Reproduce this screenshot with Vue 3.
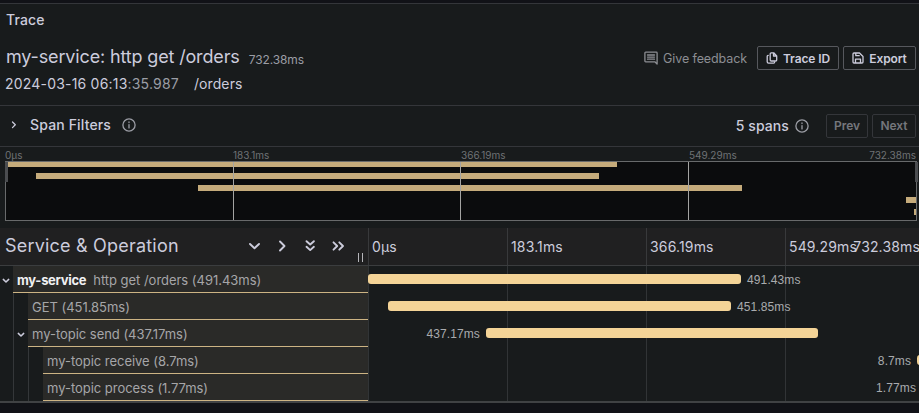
<script setup>
import { ref, computed } from 'vue';

const ticks = ['0μs', '183.1ms', '366.19ms', '549.29ms'];
const total = '732.38ms';

// left / width are percentages of the detail timeline, mini* of the minimap
const spans = ref([
  { id: 1, depth: 0, service: 'my-service', name: 'http get /orders', duration: '491.43ms', left: 0, width: 67.1, side: 'right', miniLeft: 0.2, miniWidth: 66.9, parent: true },
  { id: 2, depth: 1, name: 'GET', duration: '451.85ms', left: 3.6, width: 61.7, side: 'right', miniLeft: 3.33, miniWidth: 61.8 },
  { id: 3, depth: 1, name: 'my-topic send', duration: '437.17ms', left: 21.22, width: 59.75, side: 'left', miniLeft: 21.1, miniWidth: 59.75, parent: true },
  { id: 4, depth: 2, name: 'my-topic receive', duration: '8.7ms', left: 98.75, width: 1.2, side: 'left', miniLeft: 98.95, miniWidth: 1.05 },
  { id: 5, depth: 2, name: 'my-topic process', duration: '1.77ms', left: 99.65, width: 0.3, side: 'left', miniLeft: 99.75, miniWidth: 0.25 },
]);

const spanCount = computed(() => `${spans.value.length} spans`);
</script>

<template>
  <div class="page">
    <section class="panel">
      <h6 class="panel-title">Trace</h6>

      <header class="trace-header">
        <div class="title-row">
          <h1>my-service: http get /orders</h1>
          <span class="total">{{ total }}</span>
          <div class="actions">
            <a class="feedback">
              <svg width="14" height="14" viewBox="0 0 14 14">
                <path d="M1.7 1.2h10.6q.8 0 .8.8v11l-2.3-2.2H1.7q-.8 0-.8-.8V2q0-.8.8-.8zM3.5 4h7M3.5 6.1h7M3.5 8.2h7" />
              </svg>
              Give feedback
            </a>
            <button class="btn trace-id">
              <svg width="12" height="12" viewBox="0 0 12 12">
                <path d="M4.2 2v6q0 1 1 1h4.5q1 0 1-1V4L7.7.8H5.2q-1 0-1 1zM7.5 1v3h3M2.2 3.3q-1 .2-1 1v5.5q0 1.4 1.4 1.4h4.8q1 0 1.2-.8" />
              </svg>
              Trace ID
            </button>
            <button class="btn export">
              <svg width="12" height="12" viewBox="0 0 12 12">
                <path d="M2 1h5.5L11 4.5V10q0 1-1 1H2q-1 0-1-1V2q0-1 1-1zM3.8 1v2.7h3.4M3.5 11V7.2h5V11" />
              </svg>
              Export
            </button>
          </div>
        </div>
        <div class="sub-row">
          <span class="date">2024-03-16 06:13<span class="dim">:35.987</span></span>
          <span class="url">/orders</span>
        </div>
      </header>

      <div class="filters">
        <svg class="caret" width="6" height="8" viewBox="0 0 6 8"><path d="M1.5 1l2.8 2.8-2.8 2.8" /></svg>
        <span class="filters-label">Span Filters</span>
        <svg class="info" width="14" height="14" viewBox="0 0 14 14">
          <circle cx="7" cy="7" r="6.1" /><path d="M7 6.6v3.3M7 4v.6" />
        </svg>
        <span class="count">{{ spanCount }}</span>
        <svg class="info low" width="14" height="14" viewBox="0 0 14 14">
          <circle cx="7" cy="7" r="6.1" /><path d="M7 6.6v3.3M7 4v.6" />
        </svg>
        <button class="btn disabled prev">Prev</button>
        <button class="btn disabled next">Next</button>
      </div>

      <div class="minimap">
        <div class="mini-labels">
          <span v-for="tick in ticks" :key="tick">{{ tick }}</span>
          <span class="mini-end">{{ total }}</span>
        </div>
        <div class="mini-graph">
          <div
            v-for="span in spans"
            :key="span.id"
            class="mini-bar"
            :style="{ marginLeft: span.miniLeft + '%', width: span.miniWidth + '%' }"
          ></div>
          <div class="mini-ticks"><i v-for="tick in ticks" :key="tick"></i></div>
          <div class="handle start"></div>
          <div class="handle end"></div>
        </div>
      </div>

      <div class="timeline-header">
        <div class="name-head">
          <h2>Service &amp; Operation</h2>
          <svg class="collapsers" width="98" height="14" viewBox="0 0 98 14">
            <path d="M2 5l4.500 4.200L11 5" />
            <path d="M32 2.500L36.500 7 32 11.500" />
            <path d="M58.500 2.200l3.700 3.300 3.700-3.300M58.500 7.800l3.700 3.300 3.700-3.300" />
            <path d="M85.500 3.300L89.200 7l-3.700 3.700M91.300 3.300L95 7l-3.700 3.700" />
          </svg>
          <span class="resizer"></span>
        </div>
        <div class="tick-head">
          <span v-for="tick in ticks" :key="tick">{{ tick }}</span>
          <span class="head-end">{{ total }}</span>
        </div>
      </div>

      <div v-for="span in spans" :key="span.id" class="row">
        <div class="name-col">
          <i v-for="n in span.depth" :key="n" class="indent" :class="{ first: n === 1 }"></i>
          <span class="toggle" :class="{ root: span.depth === 0 }">
            <svg v-if="span.parent" width="8" height="6" viewBox="0 0 8 6"><path d="M1.3 1.4L4 4l2.700-2.600" /></svg>
          </span>
          <div class="span-name">
            <strong v-if="span.service">{{ span.service }}</strong>
            <span>{{ span.name }} ({{ span.duration }})</span>
          </div>
        </div>
        <div class="view">
          <div class="grid"><i v-for="tick in ticks" :key="tick"></i></div>
          <div class="bar" :style="{ marginLeft: span.left + '%', width: span.width + '%' }">
            <span class="bar-label" :class="span.side">{{ span.duration }}</span>
          </div>
        </div>
      </div>
    </section>
  </div>
</template>

<style>
body {
  background: #111217;
}
</style>

<style scoped>
.page {
  box-sizing: border-box;
  width: 919px;
  height: 413px;
  padding-top: 3px;
  overflow: hidden;
  background: #111217;
  color: #ccccdc;
  font-family: Inter, "Liberation Sans", sans-serif;
  font-size: 14px;
}

.page * {
  box-sizing: border-box;
}

svg {
  display: block;
  flex: none;
  fill: none;
  stroke: currentColor;
  stroke-width: 1.3;
  stroke-linecap: round;
  stroke-linejoin: round;
}

h1, h2, h6 {
  margin: 0;
  font-weight: 400;
}

.panel {
  height: 400px;
  overflow: hidden;
  background: #181b1c;
  border-top: 1px solid #34363a;
  border-bottom: 2px solid #404244;
}

.panel-title {
  height: 32px;
  padding-left: 6px;
  font-size: 14px;
  font-weight: 500;
  letter-spacing: 0.1px;
  line-height: 32px;
}

.trace-header {
  height: 70px;
  padding: 9px 3px 0 5px;
  border-bottom: 1px solid #34363a;
}

.title-row {
  display: flex;
  align-items: center;
  height: 26px;
}

h1 {
  padding: 0 0 3px 1px;
  font-size: 18px;
  letter-spacing: -0.15px;
}

.total {
  margin: 2px 0 0 9px;
  color: #9b9da5;
  font-size: 12px;
  letter-spacing: -0.1px;
}

.actions {
  display: flex;
  align-items: center;
  margin-left: auto;
}

.feedback {
  display: flex;
  align-items: center;
  gap: 5px;
  margin-right: 10px;
  color: #8c8e93;
  font-size: 12.5px;
  letter-spacing: -0.1px;
}

.btn {
  display: flex;
  align-items: center;
  justify-content: center;
  gap: 5px;
  height: 24px;
  padding: 0;
  border: 1px solid #56585d;
  border-radius: 2px;
  background: transparent;
  color: #ccccdc;
  font: 600 12px Inter, sans-serif;
  letter-spacing: -0.1px;
}

.trace-id {
  width: 82px;
  margin-right: 4px;
}

.export {
  width: 73px;
}

.sub-row {
  display: flex;
  gap: 15px;
  height: 26px;
  line-height: 25px;
}

.date {
  letter-spacing: 0.2px;
}

.url {
  letter-spacing: 0.1px;
}

.dim {
  color: #9b9da5;
}

.filters {
  display: flex;
  align-items: center;
  height: 41px;
  padding: 0 3px 1px 11px;
  border-bottom: 1px solid #34363a;
  font-weight: 500;
}

.caret {
  margin-bottom: 2px;
}

.filters-label {
  margin: 0 11px 2px 13px;
  letter-spacing: 0.15px;
}

.info {
  margin-bottom: 1px;
  color: #9b9da5;
}

.info.low {
  margin: 1px 0 0;
}

.count {
  margin: 0 6px 0 auto;
  letter-spacing: 0.1px;
}

.disabled {
  border-color: #34363a;
  color: #75777c;
}

.prev {
  width: 42px;
  margin: 0 4px 0 17px;
}

.next {
  width: 44px;
}

.minimap {
  height: 81px;
  padding: 2px 2px 0 5px;
}

.mini-labels {
  position: relative;
  display: grid;
  grid-template-columns: repeat(4, 1fr);
  height: 12px;
  color: #6f7275;
  font-size: 10px;
  line-height: 12px;
}

.mini-end {
  position: absolute;
  right: 1px;
}

.mini-graph {
  position: relative;
  height: 60px;
  border: 1px solid #686a6b;
  background: #0b0c0d;
}

.mini-bar {
  height: 6px;
  margin-bottom: 6px;
  background: #c5ab7b;
}

.mini-bar:first-child {
  height: 5px;
}

.mini-ticks {
  position: absolute;
  inset: 0 1px 0 -1px;
  display: grid;
  grid-template-columns: repeat(4, 1fr);
}

.mini-ticks i + i {
  border-left: 1px solid #a4a4a2;
}

.handle {
  position: absolute;
  top: 0;
  width: 3px;
  height: 20px;
  background: #4b4d50;
}

.start {
  left: -1px;
}

.end {
  right: -2px;
}

.timeline-header {
  display: flex;
  height: 38px;
  border-bottom: 1px solid #3b3d3f;
  background: #202021;
}

.name-head {
  position: relative;
  display: flex;
  flex: none;
  align-items: center;
  justify-content: space-between;
  width: 368px;
  padding: 0 22px 2px 5px;
}

h2 {
  font-size: 18px;
  letter-spacing: 0.2px;
}

.collapsers {
  stroke-width: 1.9;
}

.resizer {
  position: absolute;
  right: 5px;
  bottom: 3px;
  width: 5px;
  height: 9px;
  border: solid #b5b5ba;
  border-width: 0 1px;
}

.tick-head {
  position: relative;
  display: grid;
  flex: none;
  grid-template-columns: repeat(4, 139px);
  letter-spacing: 0.15px;
  line-height: 37px;
}

.tick-head span {
  padding-left: 3px;
  border-left: 1px solid #38393b;
}

.tick-head .head-end {
  position: absolute;
  right: 4px;
  border: 0;
}

.row {
  display: flex;
  height: 27px;
}

.name-col {
  display: flex;
  flex: none;
  width: 368px;
}

.indent {
  width: 15px;
  border-right: 1px solid #343739;
}

.indent.first {
  width: 14px;
}

.toggle {
  display: flex;
  align-items: center;
  justify-content: center;
  width: 14px;
  padding-top: 2px;
}

.toggle.root {
  width: 13px;
  padding-right: 1px;
}

.toggle svg {
  stroke-width: 1.5;
}

.span-name {
  flex: 1;
  padding-left: 4px;
  border-bottom: 1px solid #cdb484;
  background: #2a2a28;
  color: #a6a6a8;
  font-size: 13px;
  letter-spacing: -0.03px;
  line-height: 28px;
  white-space: nowrap;
}

strong {
  margin-right: 7px;
  color: #f0f0f2;
  font-weight: 700;
  letter-spacing: -0.3px;
}

.view {
  position: relative;
  flex: none;
  width: 556px;
  padding-top: 8px;
}

.grid {
  position: absolute;
  inset: 0;
  display: grid;
  grid-template-columns: repeat(4, 1fr);
}

.grid i {
  border-left: 1px solid #313436;
}

.bar {
  position: relative;
  height: 10px;
  border-radius: 3px;
  background: #f4d497;
}

.bar-label {
  position: absolute;
  top: -1px;
  color: #a9abae;
  font: 12px/15px "Liberation Sans", sans-serif;
  letter-spacing: 0.1px;
}

.bar-label.right {
  left: calc(100% + 6px);
}

.bar-label.left {
  right: calc(100% + 6px);
}
</style>
